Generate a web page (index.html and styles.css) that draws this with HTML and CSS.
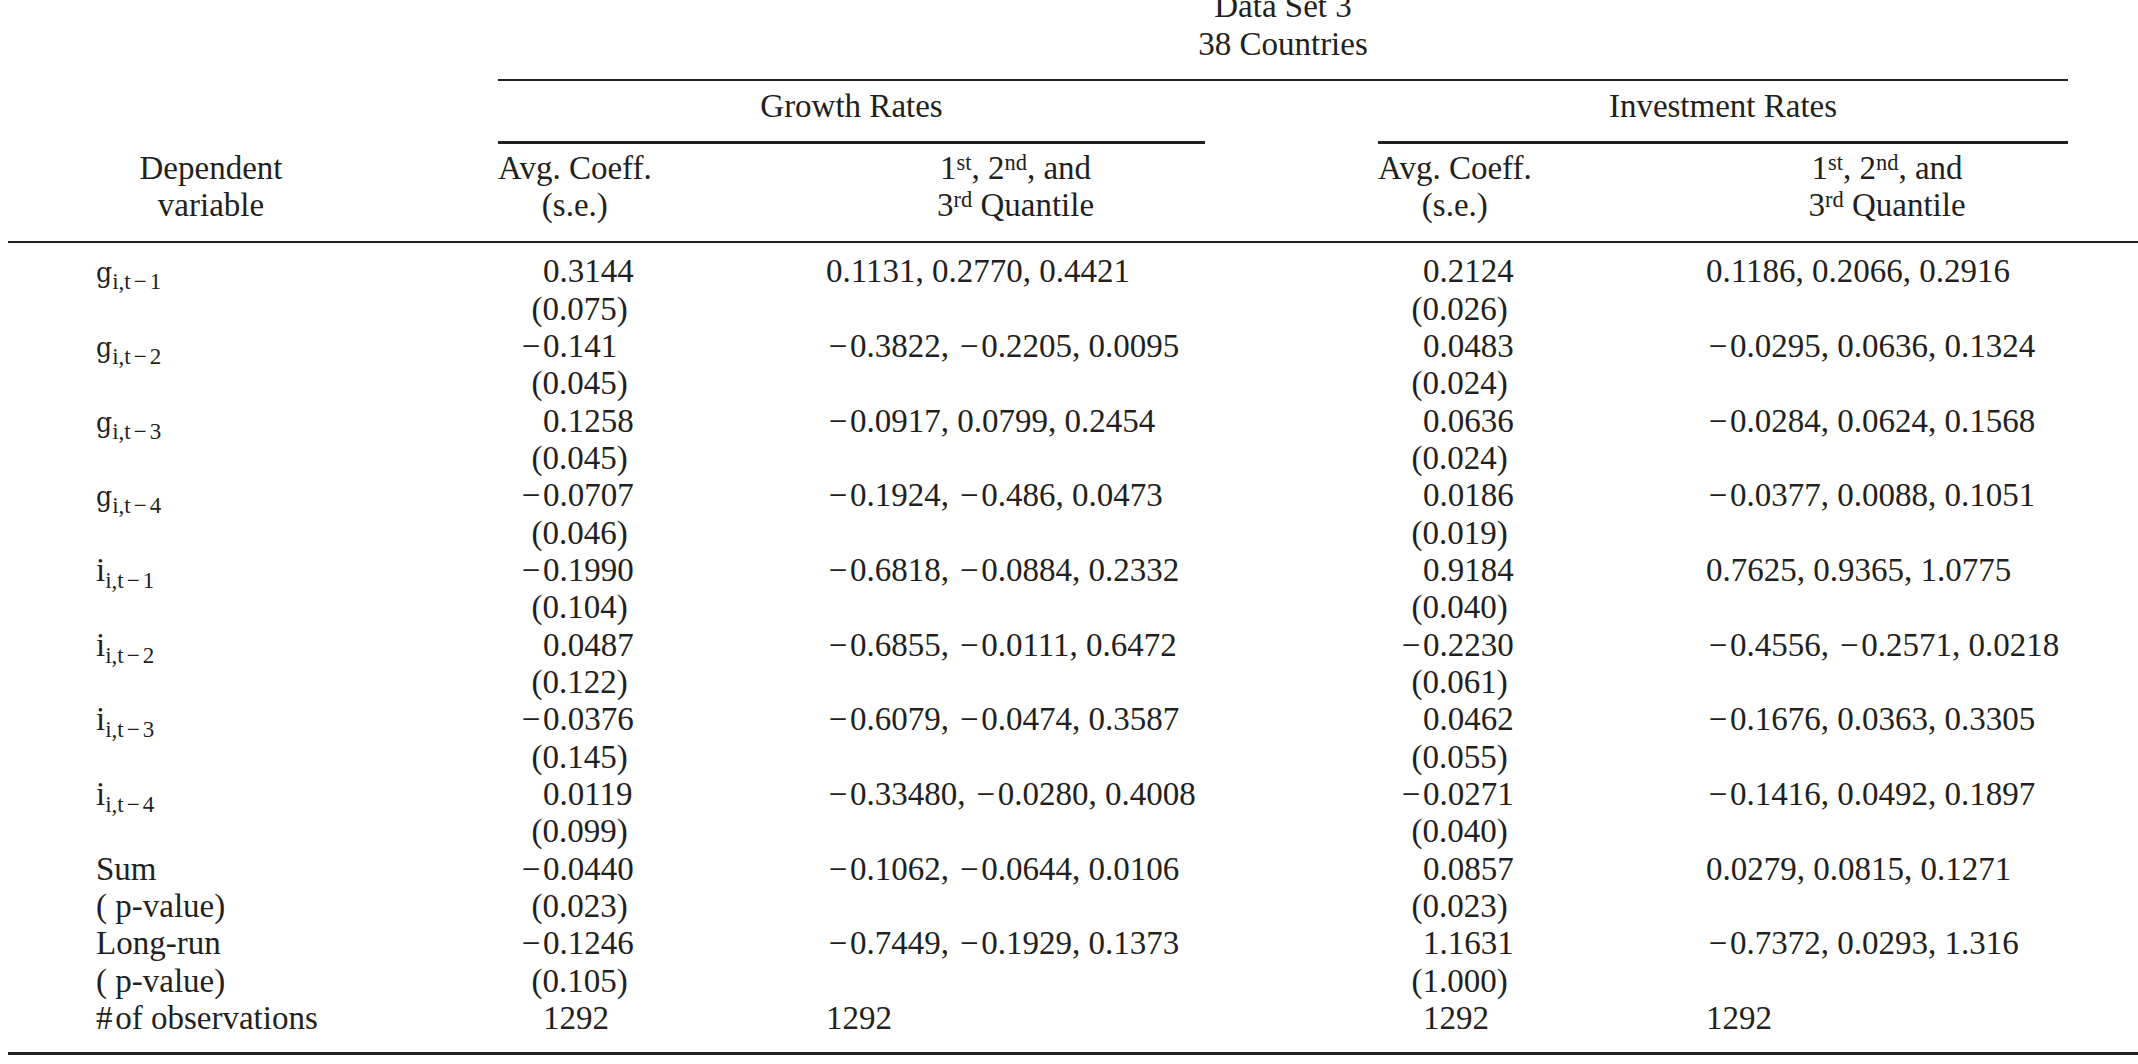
FILE: index.html
```html
<!DOCTYPE html>
<html lang="en">
<head>
<meta charset="utf-8">
<title>Data Set 3 – 38 Countries</title>
<link rel="stylesheet" href="styles.css">
</head>
<body>
<div class="page">
  <div class="tbl">
    <div class="title">Data Set 3<br>38 Countries</div>
    <div class="rule top"></div>

    <div class="grp g1">Growth Rates</div>
    <div class="grp g2">Investment Rates</div>
    <div class="rule cmid g1"></div>
    <div class="rule cmid g2"></div>

    <div class="c1 hd dep">Dependent<br>variable</div>
    <div class="c2 hd"><span class="hb">Avg. Coeff.<br>(s.e.)</span></div>
    <div class="c3 hd qh">1<sup>st</sup>, 2<sup>nd</sup>, and<br>3<sup>rd</sup> Quantile</div>
    <div class="c5 hd"><span class="hb">Avg. Coeff.<br>(s.e.)</span></div>
    <div class="c6 hd qh">1<sup>st</sup>, 2<sup>nd</sup>, and<br>3<sup>rd</sup> Quantile</div>
    <div class="rule mid"></div>

    <div class="c1 lab"><span class="gv">g</span><sub>i,t<span class="mm">−</span>1</sub></div>
    <div class="c2 av"><div><span class="s"></span>0.3144</div><div class="se">(0.075)</div></div>
    <div class="c3 q">0.1131, 0.2770, 0.4421</div>
    <div class="c5 av"><div><span class="s"></span>0.2124</div><div class="se">(0.026)</div></div>
    <div class="c6 q">0.1186, 0.2066, 0.2916</div>

    <div class="c1 lab"><span class="gv">g</span><sub>i,t<span class="mm">−</span>2</sub></div>
    <div class="c2 av"><div><span class="s">−</span>0.141</div><div class="se">(0.045)</div></div>
    <div class="c3 q"><span class="s">−</span>0.3822, <span class="s">−</span>0.2205, 0.0095</div>
    <div class="c5 av"><div><span class="s"></span>0.0483</div><div class="se">(0.024)</div></div>
    <div class="c6 q"><span class="s">−</span>0.0295, 0.0636, 0.1324</div>

    <div class="c1 lab"><span class="gv">g</span><sub>i,t<span class="mm">−</span>3</sub></div>
    <div class="c2 av"><div><span class="s"></span>0.1258</div><div class="se">(0.045)</div></div>
    <div class="c3 q"><span class="s">−</span>0.0917, 0.0799, 0.2454</div>
    <div class="c5 av"><div><span class="s"></span>0.0636</div><div class="se">(0.024)</div></div>
    <div class="c6 q"><span class="s">−</span>0.0284, 0.0624, 0.1568</div>

    <div class="c1 lab"><span class="gv">g</span><sub>i,t<span class="mm">−</span>4</sub></div>
    <div class="c2 av"><div><span class="s">−</span>0.0707</div><div class="se">(0.046)</div></div>
    <div class="c3 q"><span class="s">−</span>0.1924, <span class="s">−</span>0.486, 0.0473</div>
    <div class="c5 av"><div><span class="s"></span>0.0186</div><div class="se">(0.019)</div></div>
    <div class="c6 q"><span class="s">−</span>0.0377, 0.0088, 0.1051</div>

    <div class="c1 lab">i<sub>i,t<span class="mm">−</span>1</sub></div>
    <div class="c2 av"><div><span class="s">−</span>0.1990</div><div class="se">(0.104)</div></div>
    <div class="c3 q"><span class="s">−</span>0.6818, <span class="s">−</span>0.0884, 0.2332</div>
    <div class="c5 av"><div><span class="s"></span>0.9184</div><div class="se">(0.040)</div></div>
    <div class="c6 q">0.7625, 0.9365, 1.0775</div>

    <div class="c1 lab">i<sub>i,t<span class="mm">−</span>2</sub></div>
    <div class="c2 av"><div><span class="s"></span>0.0487</div><div class="se">(0.122)</div></div>
    <div class="c3 q"><span class="s">−</span>0.6855, <span class="s">−</span>0.0111, 0.6472</div>
    <div class="c5 av"><div><span class="s">−</span>0.2230</div><div class="se">(0.061)</div></div>
    <div class="c6 q"><span class="s">−</span>0.4556, <span class="s">−</span>0.2571, 0.0218</div>

    <div class="c1 lab">i<sub>i,t<span class="mm">−</span>3</sub></div>
    <div class="c2 av"><div><span class="s">−</span>0.0376</div><div class="se">(0.145)</div></div>
    <div class="c3 q"><span class="s">−</span>0.6079, <span class="s">−</span>0.0474, 0.3587</div>
    <div class="c5 av"><div><span class="s"></span>0.0462</div><div class="se">(0.055)</div></div>
    <div class="c6 q"><span class="s">−</span>0.1676, 0.0363, 0.3305</div>

    <div class="c1 lab">i<sub>i,t<span class="mm">−</span>4</sub></div>
    <div class="c2 av"><div><span class="s"></span>0.0119</div><div class="se">(0.099)</div></div>
    <div class="c3 q"><span class="s">−</span>0.33480, <span class="s">−</span>0.0280, 0.4008</div>
    <div class="c5 av"><div><span class="s">−</span>0.0271</div><div class="se">(0.040)</div></div>
    <div class="c6 q"><span class="s">−</span>0.1416, 0.0492, 0.1897</div>

    <div class="c1 lab">Sum<br>( p-value)</div>
    <div class="c2 av"><div><span class="s">−</span>0.0440</div><div class="se">(0.023)</div></div>
    <div class="c3 q"><span class="s">−</span>0.1062, <span class="s">−</span>0.0644, 0.0106</div>
    <div class="c5 av"><div><span class="s"></span>0.0857</div><div class="se">(0.023)</div></div>
    <div class="c6 q">0.0279, 0.0815, 0.1271</div>

    <div class="c1 lab">Long-run<br>( p-value)</div>
    <div class="c2 av"><div><span class="s">−</span>0.1246</div><div class="se">(0.105)</div></div>
    <div class="c3 q"><span class="s">−</span>0.7449, <span class="s">−</span>0.1929, 0.1373</div>
    <div class="c5 av"><div><span class="s"></span>1.1631</div><div class="se">(1.000)</div></div>
    <div class="c6 q"><span class="s">−</span>0.7372, 0.0293, 1.316</div>

    <div class="c1 lab">#&#8202;of observations</div>
    <div class="c2 av"><div><span class="s"></span>1292</div></div>
    <div class="c3 q">1292</div>
    <div class="c5 av"><div><span class="s"></span>1292</div></div>
    <div class="c6 q">1292</div>

    <div class="rule bottom"></div>
  </div>
</div>
</body>
</html>
```

FILE: styles.css
```css
* { box-sizing: border-box; }

html, body {
  margin: 0;
  padding: 0;
  background: #ffffff;
}

body {
  font-family: "Liberation Serif", "Times New Roman", serif;
  font-size: 33px;
  line-height: 37.35px;
  color: #231f20;
  overflow: hidden;
}

.page {
  width: 2138px;
  padding-left: 8px;
}

.tbl {
  display: grid;
  grid-template-columns: 490px 328px 379px 173px 328px 362px 1fr;
}

.c1 { grid-column: 1; }
.c2 { grid-column: 2; }
.c3 { grid-column: 3; }
.c5 { grid-column: 5; }
.c6 { grid-column: 6; }

.title {
  grid-column: 2 / 7;
  text-align: center;
  margin-top: -11.8px;
}

.rule { background: #231f20; height: 2px; }

.top {
  grid-column: 2 / 7;
  margin-top: 16px;
}

.g1 { grid-column: 2 / 4; }
.g2 { grid-column: 5 / 7; }

.grp {
  text-align: center;
  margin-top: 7.2px;
}

.cmid {
  height: 3px;
  margin-top: 15.5px;
}

.hd { margin-top: 6.2px; }

.dep {
  text-align: center;
  padding-right: 84px;
}

.hb {
  display: inline-block;
  text-align: center;
}

.qh { text-align: center; }

sup {
  font-size: 0.68em;
  line-height: 0;
  vertical-align: 0.42em;
}

.mid {
  grid-column: 1 / -1;
  margin-top: 16px;
  margin-bottom: 10.5px;
}

.bottom {
  grid-column: 1 / -1;
  height: 3px;
  margin-top: 14px;
}

.lab { padding-left: 88px; }

.gv {
  font-family: "DejaVu Serif Condensed", "DejaVu Serif", serif;
  font-stretch: condensed;
  font-size: 28px;
}

sub {
  font-size: 23px;
  line-height: 0;
  vertical-align: -7px;
}

.mm { margin: 0 3px; }

.av { padding-left: 21px; }
.av .se { padding-left: 12.4px; }

.s {
  display: inline-block;
  width: 24px;
  text-align: center;
}
```
